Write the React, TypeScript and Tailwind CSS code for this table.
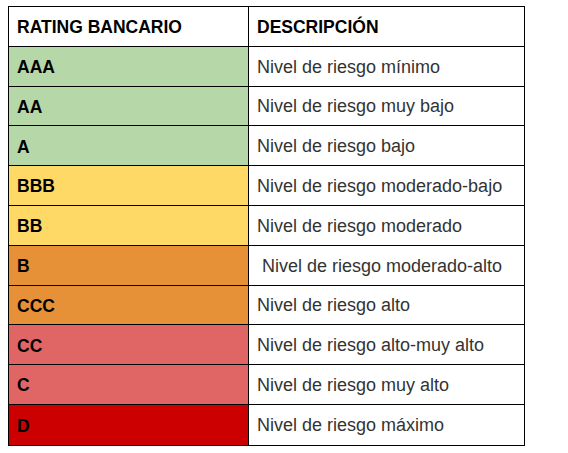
const rows = [
  { rating: "AAA", desc: "Nivel de riesgo mínimo", bg: "bg-[#b6d7a8]" },
  { rating: "AA", desc: "Nivel de riesgo muy bajo", bg: "bg-[#b6d7a8]" },
  { rating: "A", desc: "Nivel de riesgo bajo", bg: "bg-[#b6d7a8]" },
  { rating: "BBB", desc: "Nivel de riesgo moderado-bajo", bg: "bg-[#ffd966]" },
  { rating: "BB", desc: "Nivel de riesgo moderado", bg: "bg-[#ffd966]" },
  { rating: "B", desc: " Nivel de riesgo moderado-alto", bg: "bg-[#e69138]" },
  { rating: "CCC", desc: "Nivel de riesgo alto", bg: "bg-[#e69138]" },
  { rating: "CC", desc: "Nivel de riesgo alto-muy alto", bg: "bg-[#e06666]" },
  { rating: "C", desc: "Nivel de riesgo muy alto", bg: "bg-[#e06666]" },
  { rating: "D", desc: "Nivel de riesgo máximo", bg: "bg-[#cc0000]" },
];

export default function App() {
  return (
    <div className="w-[568px] h-[453px] bg-white pt-[6px] pl-[8px] font-['Liberation_Sans',Arial,sans-serif]">
      <div className="w-[517px] border border-black">
        {/* Header */}
        <div className="grid grid-cols-[240px_1fr] h-[39.8px] border-b border-black">
          <div className="flex items-center pl-[8px] pt-[2px] border-r border-black text-[17.5px] font-bold text-black">
            RATING BANCARIO
          </div>
          <div className="flex items-center pl-[8px] pt-[2px] text-[17.5px] font-bold text-black">
            DESCRIPCIÓN
          </div>
        </div>

        {rows.map((r, i) => (
          <div
            key={r.rating}
            className={`grid grid-cols-[240px_1fr] h-[39.8px] ${i < rows.length - 1 ? "border-b" : ""} border-black`}
          >
            <div className={`flex items-center pl-[8px] pt-[2px] border-r border-black text-[17.5px] font-bold text-black ${r.bg}`}>
              {r.rating}
            </div>
            <div className="flex items-center pl-[8px] pt-[2px] text-[18px] text-[#333] whitespace-pre">
              {r.desc}
            </div>
          </div>
        ))}
      </div>
    </div>
  );
}
